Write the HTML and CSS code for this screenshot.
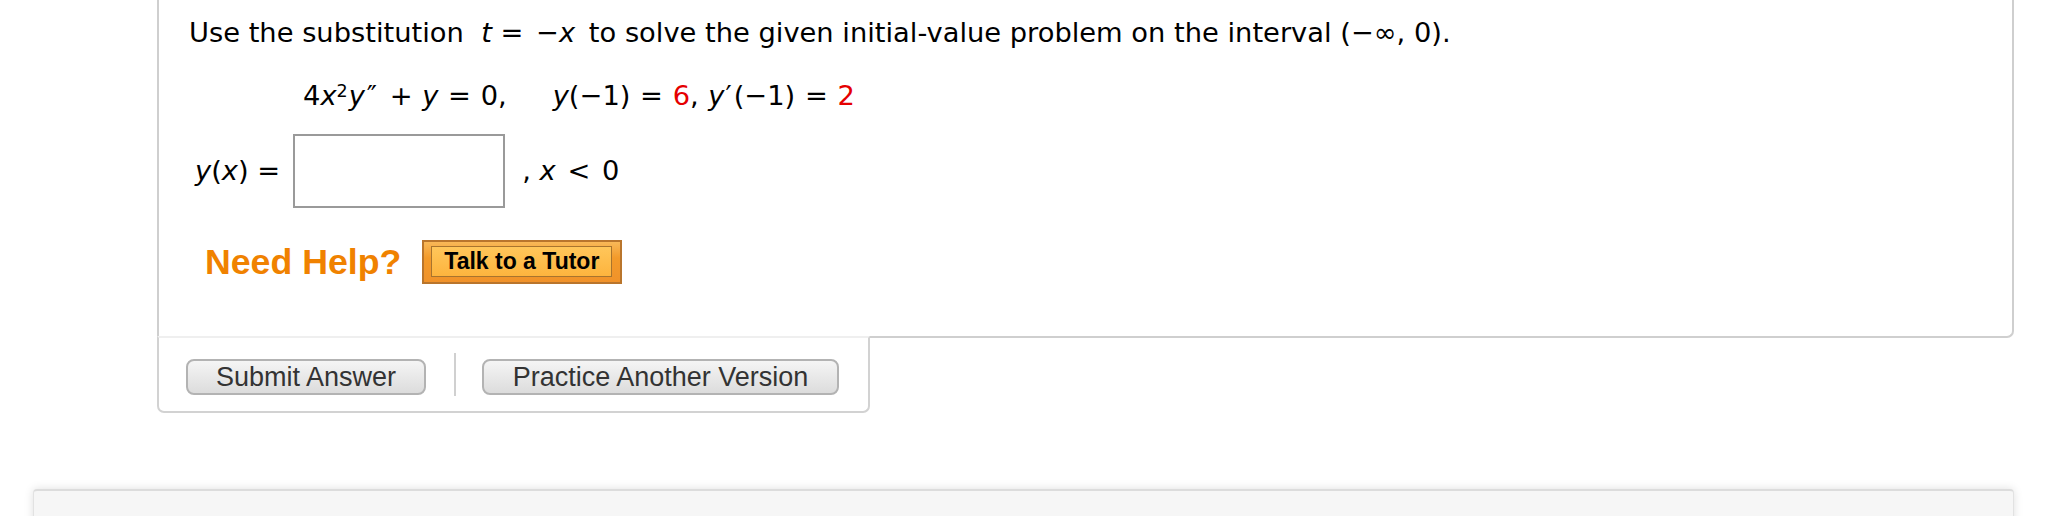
FILE: index.html
```html
<!DOCTYPE html>
<html>
<head>
<meta charset="utf-8">
<link rel="stylesheet" href="styles.css">
</head>
<body>
<div class="card">
  <p class="q">Use the substitution&nbsp; <i>t</i> = <span class="neg">−<i>x</i></span> to solve the given initial-value problem on the interval (−∞, 0).</p>
  <div class="eq">4<i>x</i><sup>2</sup><i>y</i><span class="pp">″</span> + <i>y</i> = 0,<span class="gap"></span><i>y</i>(−1) = <span class="red">6</span>, <i>y</i><span class="p1">′</span>(−1) = <span class="red">2</span></div>
  <div class="answer">
    <span class="lhs"><i>y</i>(<i>x</i>) =</span>
    <span class="box"></span>
    <span class="rhs">, <i>x</i> <span class="lt">&lt;</span> 0</span>
  </div>
  <div class="help">
    <span class="need">Need Help?</span>
    <span class="tutor"><span class="tutor-face">Talk to a Tutor</span></span>
  </div>
</div>
<div class="tab">
  <span class="btn btn-submit">Submit Answer</span>
  <span class="divider"></span>
  <span class="btn btn-practice">Practice Another Version</span>
</div>
<div class="next"></div>
</body>
</html>
```
FILE: styles.css
```css
html, body {
  margin: 0;
  padding: 0;
  background: #fff;
}
body {
  width: 2048px;
  height: 516px;
  overflow: hidden;
  font-family: "DejaVu Sans", Verdana, sans-serif;
  color: #000;
}
.card {
  box-sizing: border-box;
  margin-left: 157px;
  width: 1857px;
  border: 2px solid #cfcfcf;
  border-top: 0;
  border-radius: 0 0 7px 0;
  padding: 18px 30px 52px 30px;
}
.q {
  margin: 0;
  font-size: 27.3px;
  line-height: 30px;
  white-space: nowrap;
}
.neg {
  margin: 0 5px 0 4px;
}
.eq {
  margin: 33px 0 0 114px;
  font-size: 27.3px;
  line-height: 30px;
  word-spacing: 1px;
  white-space: nowrap;
}
.eq sup {
  font-size: 17.5px;
  line-height: 0;
  vertical-align: 8px;
  margin-right: 1px;
}
.pp {
  margin: 0 3px 0 2px;
}
.p1 {
  margin: 0 2px 0 1px;
}
.gap {
  display: inline-block;
  width: 46px;
}
.red {
  color: #e50000;
}
.answer {
  margin: 23px 0 0 6px;
  display: flex;
  align-items: center;
  font-size: 27.3px;
  line-height: 30px;
  white-space: nowrap;
}
.box {
  box-sizing: border-box;
  width: 212px;
  height: 74px;
  margin-left: 13px;
  border: 2px solid #9a9a9a;
  background: #fff;
}
.rhs {
  margin-left: 17px;
}
.lt {
  margin: 0 3px;
}
.help {
  margin: 32px 0 0 16px;
  display: flex;
  align-items: center;
}
.need {
  font-family: "Liberation Sans", Arial, sans-serif;
  font-weight: bold;
  font-size: 35.7px;
  color: #f08200;
}
.tutor {
  box-sizing: border-box;
  margin-left: 21px;
  width: 200px;
  height: 44px;
  border: 2px solid #b9752c;
  background: linear-gradient(#f8b858, #f39a2a 40%, #f0922a);
  display: flex;
  padding: 4px 8px 5px 7px;
}
.tutor-face {
  flex: 1;
  border: 1px solid #a8742e;
  background: linear-gradient(#ffc65a, #fdb43e);
  font-family: "Liberation Sans", Arial, sans-serif;
  font-weight: bold;
  font-size: 23px;
  line-height: 28px;
  text-align: center;
  color: #000;
  white-space: nowrap;
}
.tab {
  box-sizing: border-box;
  margin: -2px 0 0 157px;
  width: 713px;
  border: 2px solid #d2d2d2;
  border-top-color: #efefef;
  border-radius: 0 0 7px 7px;
  background: #fff;
  padding: 21px 29px 15px 27px;
  display: flex;
  align-items: flex-start;
}
.btn {
  box-sizing: border-box;
  height: 36px;
  border: 2px solid #b3b3b3;
  border-radius: 8px;
  background: linear-gradient(#f5f5f5, #e6e6e6 60%, #dcdcdc);
  font-family: "Liberation Sans", Arial, sans-serif;
  font-size: 27px;
  line-height: 32px;
  color: #333;
  text-align: center;
  white-space: nowrap;
}
.btn-submit {
  width: 240px;
}
.btn-practice {
  width: 357px;
}
.divider {
  width: 2px;
  height: 43px;
  margin: -6px 26px 0 28px;
  background: #d0d0d0;
}
.next {
  box-sizing: border-box;
  margin: 76px 0 0 33px;
  width: 1981px;
  height: 120px;
  background: #f6f6f6;
  border: 1px solid #e2e2e2;
  border-top: 2px solid #dcdcdc;
  border-radius: 4px 4px 0 0;
  box-shadow: 0 0 10px rgba(0, 0, 0, 0.13);
}
```
